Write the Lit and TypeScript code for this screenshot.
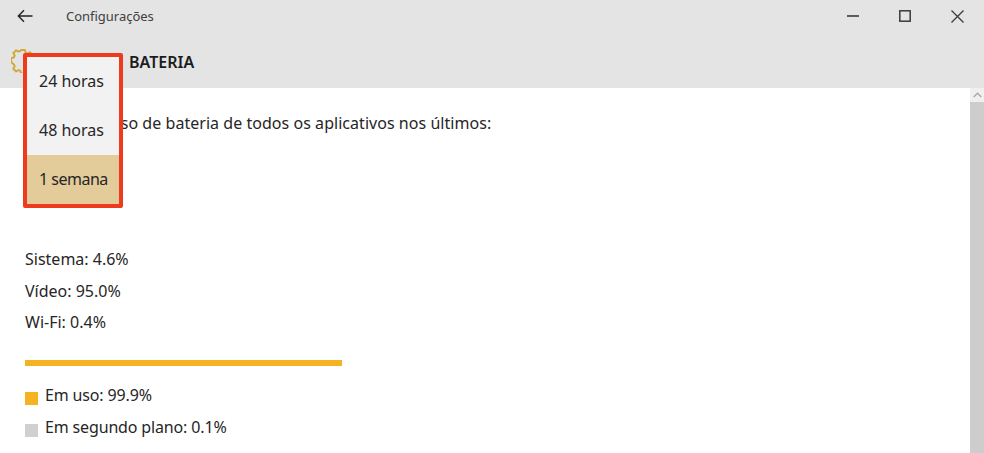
import { LitElement, html, css } from "lit";
import { customElement } from "lit/decorators.js";

@customElement("app-root")
export class AppRoot extends LitElement {
  static styles = css`
    :host { display: block; width: 984px; height: 453px; overflow: hidden; position: relative; background: #fff; font-family: "Noto Sans", "Open Sans", sans-serif; color: #262626; }
    .head { background: #e4e4e4; height: 88px; display: flex; flex-direction: column; }
    .title { height: 32px; display: flex; align-items: center; padding-left: 17px; }
    .title .back { display: block; flex: none; }
    .title span { margin-left: 33px; padding-bottom: 1px; font-size: 13px; color: #404040; letter-spacing: -0.02px; }
    .win { margin-left: auto; display: flex; align-items: center; gap: 40px; padding-right: 20px; }
    .win svg { display: block; }
    .section { flex: 1; display: flex; align-items: center; padding: 3px 0 0 11px; }
    .gear { display: block; flex: none; margin-top: -4px; }
    .section b { margin-left: 94px; font-size: 16px; font-weight: 600; color: #1c1c1c; }
    .main { display: flex; height: 365px; }
    .content { flex: 1; padding: 0 0 0 25px; font-size: 16px; }
    .intro { margin: 25px 0 0 0; padding-left: 84px; height: 20px; line-height: 20px; letter-spacing: 0.04px; }
    .stats { margin-top: 116px; display: flex; flex-direction: column; gap: 10.5px; }
    .stats div { height: 21px; line-height: 21px; }
    .bar { width: 317px; height: 6px; background: #f5b324; margin-top: 26.5px; }
    .legend { margin-top: 19.5px; display: flex; flex-direction: column; gap: 11px; letter-spacing: -0.15px; }
    .legend div { display: flex; align-items: center; height: 21px; line-height: 21px; }
    .sq { width: 13px; height: 13px; margin: 6px 7px 0 0; flex: none; }
    .sq.a { background: #f5b324; }
    .sq.b { background: #d0d0d0; }
    .scroll { width: 14px; display: flex; flex-direction: column; background: #f0f0f0; }
    .arrow { height: 14px; background: #f0f0f0; display: flex; align-items: center; justify-content: center; }
    .thumb { flex: 1; background: #cdcdcd; }
    .menu { position: absolute; left: 23px; top: 53px; width: 100px; height: 155px; box-sizing: border-box; border: 4px solid #ef3b1d; border-radius: 2px; background: #f2f2f2; display: flex; flex-direction: column; font-size: 16px; }
    .menu div { flex: 1; display: flex; align-items: center; padding: 0 0 2px 12px; }
    .menu .sel { background: #e3cc9a; letter-spacing: -0.5px; }
  `;

  render() {
    return html`
      <div class="head">
        <div class="title">
          <svg class="back" width="16" height="14" viewBox="0 0 16 14" fill="none" stroke="#222" stroke-width="1.4">
            <path d="M15.5 7H1.5M7 1.3 1.3 7 7 12.7" />
          </svg>
          <span>Configurações</span>
          <div class="win">
            <svg width="12" height="12" viewBox="0 0 12 12" fill="none" stroke="#3a3a3a" stroke-width="1.6"><path d="M0 6h12" /></svg>
            <svg width="12" height="12" viewBox="0 0 12 12" fill="none" stroke="#3a3a3a" stroke-width="1.5"><rect x="0.8" y="0.8" width="10.4" height="10.4" /></svg>
            <svg width="13" height="13" viewBox="0 0 13 13" fill="none" stroke="#3a3a3a" stroke-width="1.3"><path d="M.5.5l12 12M12.5.5l-12 12" /></svg>
          </div>
        </div>
        <div class="section">
          <svg class="gear" width="24" height="26" viewBox="0 0 24 24" fill="none" stroke="#d3a93f" stroke-width="2" stroke-linejoin="round">
            <path d="M10 2h4l.6 2.7 1.9.8 2.4-1.4 2.8 2.8-1.4 2.4.8 1.9 2.7.6v4l-2.7.6-.8 1.9 1.4 2.4-2.8 2.8-2.4-1.4-1.9.8-.6 2.7h-4l-.6-2.7-1.9-.8-2.4 1.4-2.8-2.8 1.4-2.4-.8-1.9L.2 14v-4l2.7-.6.8-1.9-1.4-2.4 2.8-2.8 2.4 1.4 1.9-.8z" />
          </svg>
          <b>BATERIA</b>
        </div>
      </div>
      <div class="main">
        <div class="content">
          <div class="intro">Uso de bateria de todos os aplicativos nos últimos:</div>
          <div class="stats">
            <div>Sistema: 4.6%</div>
            <div>Vídeo: 95.0%</div>
            <div>Wi-Fi: 0.4%</div>
          </div>
          <div class="bar"></div>
          <div class="legend">
            <div><i class="sq a"></i>Em uso: 99.9%</div>
            <div><i class="sq b"></i>Em segundo plano: 0.1%</div>
          </div>
        </div>
        <div class="scroll">
          <div class="arrow">
            <svg width="9" height="6" viewBox="0 0 9 6" fill="none" stroke="#a8a8a8" stroke-width="1.4"><path d="M.7 5 4.5 1.3 8.3 5" /></svg>
          </div>
          <div class="thumb"></div>
        </div>
      </div>
      <div class="menu">
        <div>24 horas</div>
        <div>48 horas</div>
        <div class="sel">1 semana</div>
      </div>
    `;
  }
}
